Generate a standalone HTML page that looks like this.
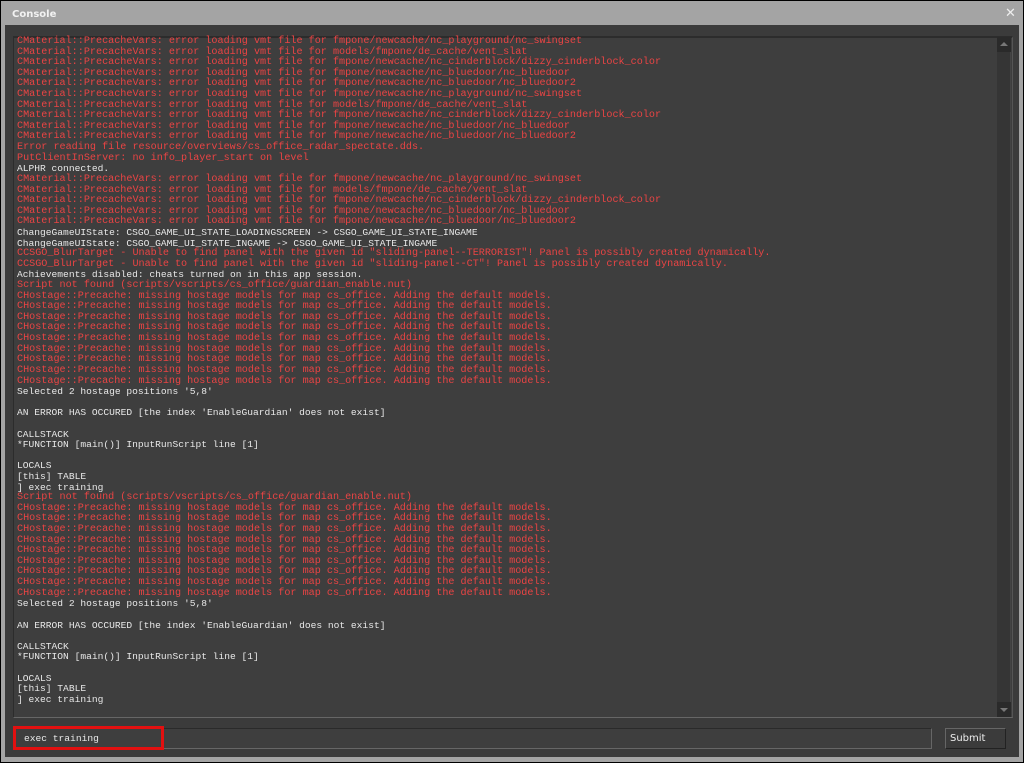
<!DOCTYPE html>
<html><head><meta charset="utf-8"><style>
*{margin:0;padding:0;box-sizing:border-box}
body{width:1024px;height:763px;background:#000;overflow:hidden;font-family:"Liberation Mono",monospace;position:relative}
.win{position:absolute;left:1px;top:1px;width:1022px;height:761px;background:#a4a4a4}
.title{position:absolute;left:12px;top:9px;font:bold 10px "DejaVu Sans",sans-serif;color:#f2f2f2}
.x{position:absolute;left:1005px;top:6px;color:#eee;font:bold 13px "DejaVu Sans",sans-serif}
.panel{position:absolute;left:5px;top:25px;width:1014px;height:732px;background:#3b3b3b}
.out{position:absolute;left:13px;top:36px;width:1000px;height:682px;background:#3e3e3e;border-top:2px solid #2c2c2c;border-left:1px solid #2c2c2c;border-right:1px solid #555;border-bottom:1px solid #666}
.sb{position:absolute;left:997px;top:37px;width:14px;height:680px;background:#2a2a2a}
.thumb{position:absolute;left:997px;top:52px;width:14px;height:650px;background:#353535;border-right:1px solid #444}
.txt{position:absolute;left:17px;top:37px;color:#e8e8e8}
.txt div{height:10.61px;line-height:10.61px;font-size:9.6px;white-space:pre}
.txt .r{color:#ea4444;font-size:10.15px}
.inp{position:absolute;left:13px;top:728px;width:919px;height:21px;background:#3e3e3e;border-top:1px solid #2a2a2a;border-bottom:1px solid #666;border-right:1px solid #666}
.red{position:absolute;left:13px;top:726px;width:151px;height:24px;border:3px solid #e21010}
.it{position:absolute;left:24px;top:733px;font-size:9.6px;color:#e8e8e8}
.btn{position:absolute;left:945px;top:728px;width:61px;height:21px;border:1px solid #666;border-right-color:#222;border-bottom-color:#222;background:#3b3b3b;color:#eee;font:10px "DejaVu Sans",sans-serif;padding:4px 0 0 4px}
</style></head><body>
<div class="win"></div>
<div class="title">Console</div>
<div class="x">✕</div>
<div class="panel"></div>
<div class="out"></div>
<div class="sb"></div>
<div class="thumb"></div>
<div style="position:absolute;left:1000px;top:42px;width:0;height:0;border-left:4px solid transparent;border-right:4px solid transparent;border-bottom:4px solid #777"></div>
<div style="position:absolute;left:1000px;top:708px;width:0;height:0;border-left:4px solid transparent;border-right:4px solid transparent;border-top:4px solid #777"></div>
<div class="txt">
<div class="r">CMaterial::PrecacheVars: error loading vmt file for fmpone/newcache/nc_playground/nc_swingset</div>
<div class="r">CMaterial::PrecacheVars: error loading vmt file for models/fmpone/de_cache/vent_slat</div>
<div class="r">CMaterial::PrecacheVars: error loading vmt file for fmpone/newcache/nc_cinderblock/dizzy_cinderblock_color</div>
<div class="r">CMaterial::PrecacheVars: error loading vmt file for fmpone/newcache/nc_bluedoor/nc_bluedoor</div>
<div class="r">CMaterial::PrecacheVars: error loading vmt file for fmpone/newcache/nc_bluedoor/nc_bluedoor2</div>
<div class="r">CMaterial::PrecacheVars: error loading vmt file for fmpone/newcache/nc_playground/nc_swingset</div>
<div class="r">CMaterial::PrecacheVars: error loading vmt file for models/fmpone/de_cache/vent_slat</div>
<div class="r">CMaterial::PrecacheVars: error loading vmt file for fmpone/newcache/nc_cinderblock/dizzy_cinderblock_color</div>
<div class="r">CMaterial::PrecacheVars: error loading vmt file for fmpone/newcache/nc_bluedoor/nc_bluedoor</div>
<div class="r">CMaterial::PrecacheVars: error loading vmt file for fmpone/newcache/nc_bluedoor/nc_bluedoor2</div>
<div class="r">Error reading file resource/overviews/cs_office_radar_spectate.dds.</div>
<div class="r">PutClientInServer: no info_player_start on level</div>
<div>ALPHR connected.</div>
<div class="r">CMaterial::PrecacheVars: error loading vmt file for fmpone/newcache/nc_playground/nc_swingset</div>
<div class="r">CMaterial::PrecacheVars: error loading vmt file for models/fmpone/de_cache/vent_slat</div>
<div class="r">CMaterial::PrecacheVars: error loading vmt file for fmpone/newcache/nc_cinderblock/dizzy_cinderblock_color</div>
<div class="r">CMaterial::PrecacheVars: error loading vmt file for fmpone/newcache/nc_bluedoor/nc_bluedoor</div>
<div class="r">CMaterial::PrecacheVars: error loading vmt file for fmpone/newcache/nc_bluedoor/nc_bluedoor2</div>
<div>ChangeGameUIState: CSGO_GAME_UI_STATE_LOADINGSCREEN -> CSGO_GAME_UI_STATE_INGAME</div>
<div>ChangeGameUIState: CSGO_GAME_UI_STATE_INGAME -> CSGO_GAME_UI_STATE_INGAME</div>
<div class="r">CCSGO_BlurTarget - Unable to find panel with the given id "sliding-panel--TERRORIST"! Panel is possibly created dynamically.</div>
<div class="r">CCSGO_BlurTarget - Unable to find panel with the given id "sliding-panel--CT"! Panel is possibly created dynamically.</div>
<div>Achievements disabled: cheats turned on in this app session.</div>
<div class="r">Script not found (scripts/vscripts/cs_office/guardian_enable.nut)</div>
<div class="r">CHostage::Precache: missing hostage models for map cs_office. Adding the default models.</div>
<div class="r">CHostage::Precache: missing hostage models for map cs_office. Adding the default models.</div>
<div class="r">CHostage::Precache: missing hostage models for map cs_office. Adding the default models.</div>
<div class="r">CHostage::Precache: missing hostage models for map cs_office. Adding the default models.</div>
<div class="r">CHostage::Precache: missing hostage models for map cs_office. Adding the default models.</div>
<div class="r">CHostage::Precache: missing hostage models for map cs_office. Adding the default models.</div>
<div class="r">CHostage::Precache: missing hostage models for map cs_office. Adding the default models.</div>
<div class="r">CHostage::Precache: missing hostage models for map cs_office. Adding the default models.</div>
<div class="r">CHostage::Precache: missing hostage models for map cs_office. Adding the default models.</div>
<div>Selected 2 hostage positions '5,8'</div>
<div></div>
<div>AN ERROR HAS OCCURED [the index 'EnableGuardian' does not exist]</div>
<div></div>
<div>CALLSTACK</div>
<div>*FUNCTION [main()] InputRunScript line [1]</div>
<div></div>
<div>LOCALS</div>
<div>[this] TABLE</div>
<div>] exec training</div>
<div class="r">Script not found (scripts/vscripts/cs_office/guardian_enable.nut)</div>
<div class="r">CHostage::Precache: missing hostage models for map cs_office. Adding the default models.</div>
<div class="r">CHostage::Precache: missing hostage models for map cs_office. Adding the default models.</div>
<div class="r">CHostage::Precache: missing hostage models for map cs_office. Adding the default models.</div>
<div class="r">CHostage::Precache: missing hostage models for map cs_office. Adding the default models.</div>
<div class="r">CHostage::Precache: missing hostage models for map cs_office. Adding the default models.</div>
<div class="r">CHostage::Precache: missing hostage models for map cs_office. Adding the default models.</div>
<div class="r">CHostage::Precache: missing hostage models for map cs_office. Adding the default models.</div>
<div class="r">CHostage::Precache: missing hostage models for map cs_office. Adding the default models.</div>
<div class="r">CHostage::Precache: missing hostage models for map cs_office. Adding the default models.</div>
<div>Selected 2 hostage positions '5,8'</div>
<div></div>
<div>AN ERROR HAS OCCURED [the index 'EnableGuardian' does not exist]</div>
<div></div>
<div>CALLSTACK</div>
<div>*FUNCTION [main()] InputRunScript line [1]</div>
<div></div>
<div>LOCALS</div>
<div>[this] TABLE</div>
<div>] exec training</div>
</div>
<div class="inp"></div>
<div class="red"></div>
<div class="it">exec training</div>
<div class="btn">Submit</div>
</body></html>
